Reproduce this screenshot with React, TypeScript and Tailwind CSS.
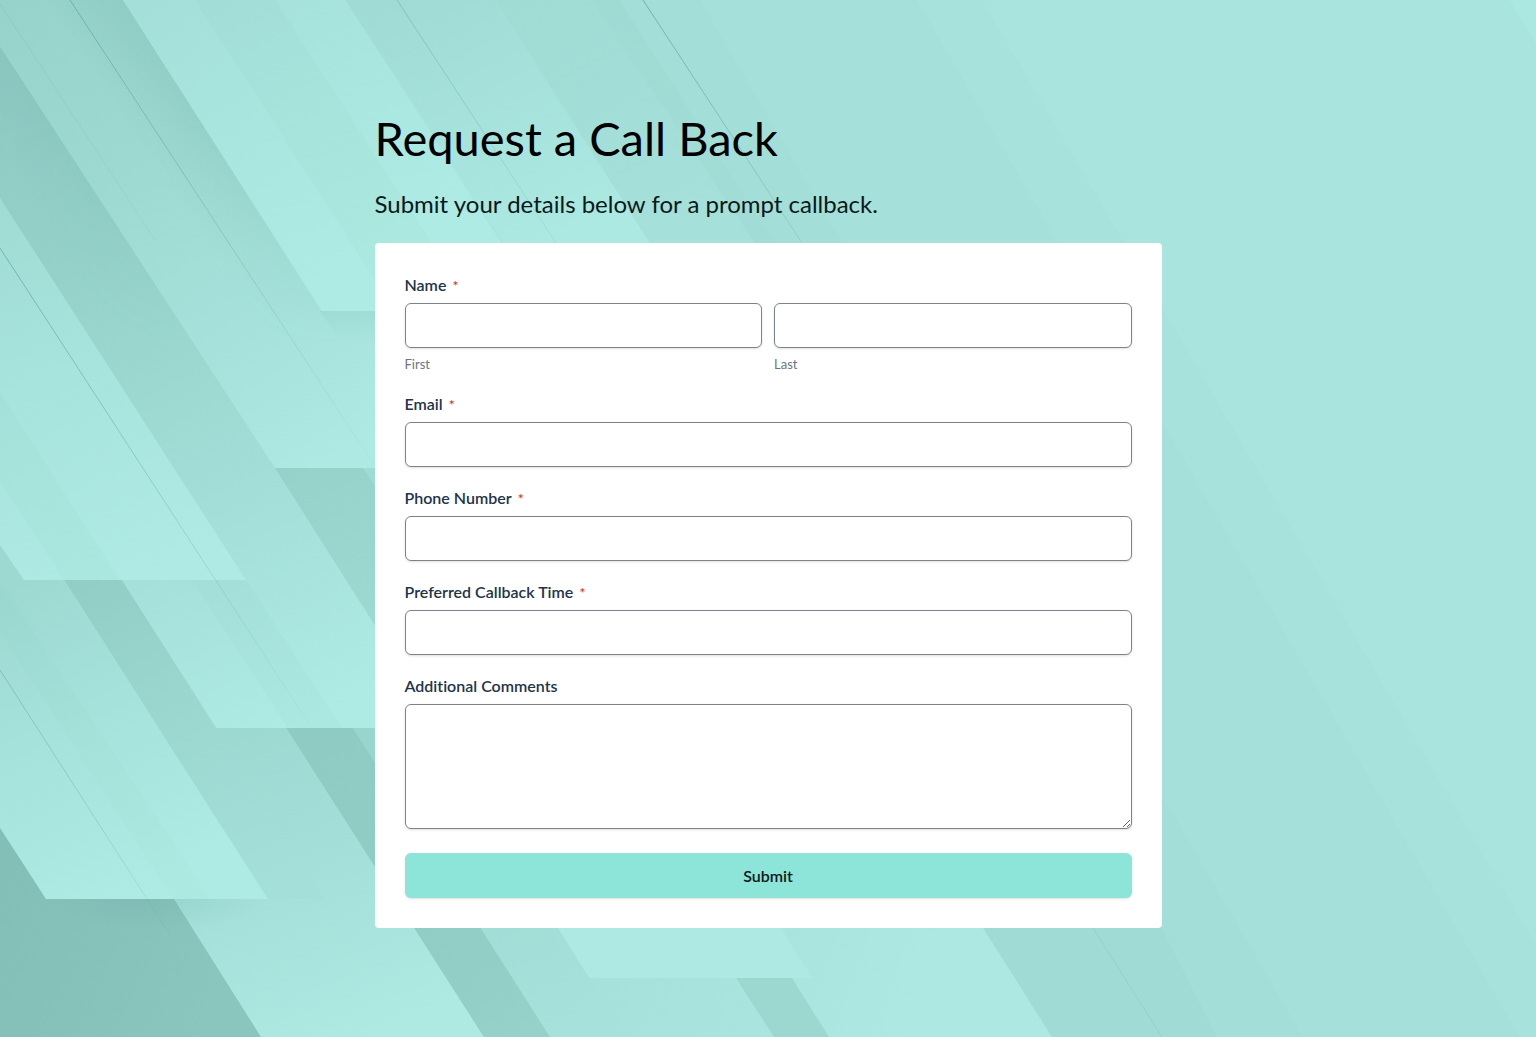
import type { ReactNode } from "react";

const fieldClass =
  "block w-full rounded-md border border-[#7d838d] bg-white px-3 text-base text-[#1e2f45] shadow-sm outline-none focus:border-[#4fb8a9]";
const labelClass = "mb-2 block text-base leading-5 font-semibold text-[#22344a]";

function Required() {
  return (
    <span className="ml-[6px] text-sm leading-none font-semibold text-[#d4401f]" aria-hidden="true">
      *
    </span>
  );
}

function Field({ id, label, required, children }: { id: string; label: string; required?: boolean; children: ReactNode }) {
  return (
    <div>
      <label htmlFor={id} className={labelClass}>
        {label}
        {required && <Required />}
      </label>
      {children}
    </div>
  );
}

type Stop = [number, string];

function Fade({ id, from, to, stops }: { id: string; from: [number, number]; to: [number, number]; stops: Stop[] }) {
  return (
    <linearGradient id={id} gradientUnits="userSpaceOnUse" x1={from[0]} y1={from[1]} x2={to[0]} y2={to[1]}>
      {stops.map(([offset, color]) => (
        <stop key={offset} offset={offset} stopColor={color} />
      ))}
    </linearGradient>
  );
}

function Shade({ id, from, to, opacity, far = 0 }: { id: string; from: [number, number]; to: [number, number]; opacity: number; far?: number }) {
  return (
    <linearGradient id={id} gradientUnits="userSpaceOnUse" x1={from[0]} y1={from[1]} x2={to[0]} y2={to[1]}>
      <stop offset="0" stopColor="#5fa39a" stopOpacity={opacity} />
      <stop offset="1" stopColor="#5fa39a" stopOpacity={far} />
    </linearGradient>
  );
}

function Backdrop() {
  return (
    <svg
      className="absolute inset-0 h-full w-full"
      viewBox="0 0 1536 1037"
      preserveAspectRatio="xMidYMid slice"
      aria-hidden="true"
    >
      <defs>
        <Fade id="upperRight" from={[400, 0]} to={[520, 260]} stops={[[0, "#a0dcd5"], [1, "#ace9e2"]]} />
        <Fade id="upperMid" from={[520, 0]} to={[640, 250]} stops={[[0, "#a0dbd4"], [1, "#a5e1da"]]} />
        <Fade id="p3" from={[150, 0]} to={[320, 290]} stops={[[0, "#a4e0d9"], [0.5, "#a9e6df"], [1, "#aeebe4"]]} />
        <Fade id="p2" from={[20, 0]} to={[330, 465]} stops={[[0, "#97d3ca"], [0.4, "#9fdad2"], [0.72, "#a6e2db"], [1, "#aeeae3"]]} />
        <Fade id="p5" from={[0, 80]} to={[310, 725]} stops={[[0, "#8fcac3"], [0.25, "#94d0c8"], [0.5, "#9dd9d1"], [0.72, "#a5e1da"], [1, "#aeebe4"]]} />
        <Fade id="p1" from={[0, 210]} to={[150, 580]} stops={[[0, "#a0dcd4"], [0.45, "#a7e4dd"], [1, "#afebe4"]]} />
        <Fade id="p4" from={[0, 590]} to={[150, 890]} stops={[[0, "#9dd9d1"], [0.5, "#a6e3dc"], [1, "#aeebe4"]]} />
        <Fade id="band4" from={[90, 580]} to={[250, 890]} stops={[[0, "#92cec6"], [0.5, "#9cd8d0"], [1, "#a4e0d9"]]} />
        <Fade id="p6" from={[250, 728]} to={[370, 1037]} stops={[[0, "#9dd9d1"], [0.45, "#a4e0d9"], [1, "#aee9e2"]]} />
        <Fade id="corner" from={[0, 900]} to={[220, 1000]} stops={[[0, "#83beb7"], [1, "#8bc6be"]]} />
        <Fade id="under2" from={[300, 468]} to={[374, 640]} stops={[[0, "#96d2c9"], [1, "#9fdad2"]]} />
        <Fade id="band6" from={[300, 740]} to={[520, 1037]} stops={[[0, "#8fcac3"], [0.8, "#92cec6"], [1, "#96d2c9"]]} />
        <Fade id="right6" from={[480, 900]} to={[560, 1037]} stops={[[0, "#a1ddd5"], [1, "#a6e2db"]]} />
        <Fade id="bottomMid" from={[540, 900]} to={[900, 1037]} stops={[[0, "#a4e0d9"], [0.6, "#a9e5de"], [1, "#ade9e2"]]} />
        <Shade id="edge3" from={[222, 150]} to={[167, 186]} opacity={0.16} />
        <Shade id="edge1" from={[67, 150]} to={[17, 183]} opacity={0.1} />
        <Shade id="foot3" from={[0, 311]} to={[0, 345]} opacity={0.12} />
        <Shade id="line" from={[0, 0]} to={[0, 460]} opacity={0.7} far={0.05} />
        <Shade id="lineUpper" from={[0, 0]} to={[0, 270]} opacity={0.75} far={0.2} />
        <Shade id="lineMid" from={[0, 248]} to={[0, 735]} opacity={0.7} far={0.05} />
        <Shade id="lineLow" from={[0, 670]} to={[0, 938]} opacity={0.5} far={0.15} />
        <radialGradient id="foot4" gradientUnits="userSpaceOnUse" cx="0" cy="0" r="1" gradientTransform="translate(155 899) scale(110 32)">
          <stop offset="0" stopColor="#5fa39a" stopOpacity="0.18" />
          <stop offset="1" stopColor="#5fa39a" stopOpacity="0" />
        </radialGradient>
        <linearGradient id="fadeDown" gradientUnits="userSpaceOnUse" x1="0" y1="120" x2="0" y2="345">
          <stop offset="0" stopColor="#fff" />
          <stop offset="1" stopColor="#000" />
        </linearGradient>
        <mask id="fadeMask" maskUnits="userSpaceOnUse" x="0" y="0" width="420" height="360">
          <rect width="420" height="360" fill="url(#fadeDown)" />
        </mask>
      </defs>

      {/* right side: broad, barely visible bands */}
      <rect width="1536" height="1037" fill="#a9e5de" />
      <polygon points="700,0 982,0 1590,1037 700,1037" fill="#a7e3dc" />
      <polygon points="700,0 917,0 1520,1037 700,1037" fill="#a5e1da" />
      <polygon points="600,0 700,0 1303,1037 600,1037" fill="#a3dfd8" />
      <polygon points="595,0 690,0 1217,1037 595,1037" fill="#a0dcd5" />
      <polygon points="595,0 700,0 870,290 780,290" fill="#a3dfd8" />
      <polygon points="1510,0 1536,0 1536,44" fill="#abe8e1" />

      {/* top centre */}
      <polygon points="345,0 495,0 680,290 535,290" fill="url(#upperRight)" />
      <polygon points="495,0 620,0 805,290 680,290" fill="url(#upperMid)" />
      <polygon points="592,0 618,0 775,243 755,243" fill="#9ddad2" opacity="0.5" />

      {/* bottom centre */}
      <polygon points="415,860 940,860 1052,1037 415,1037" fill="url(#bottomMid)" />
      <polygon points="736,978 792,978 829,1037 774,1037" fill="#9cd8d0" />
      <polygon points="528,880 751,880 812,978 588,978" fill="#aeeae3" />
      <polygon points="440,864 518,864 626,1037 550,1037" fill="url(#right6)" />

      {/* stacked slanted sheets on the left */}
      <polygon points="200,290 420,290 500,468 374,600" fill="#a9e5de" />
      <polygon points="270,460 400,460 400,728 374,728" fill="url(#under2)" />
      <polygon points="50,728 286,728 484,1037 261,1037 174,899" fill="url(#p6)" />
      <polygon points="353,728 440,728 440,864" fill="#99d5cc" />
      <polygon points="286,728 353,728 550,1037 484,1037" fill="url(#band6)" />
      <polygon points="64,580 122,580 325,899 268,899" fill="url(#band4)" />
      <polygon points="217,728 286,728 394,899 325,899" fill="url(#p6)" />
      <polygon points="0,820 46,899 174,899 261,1037 0,1037" fill="url(#corner)" />
      <rect x="40" y="899" width="230" height="36" fill="url(#foot4)" />
      <polygon points="0,540 38,540 268,899 46,899 0,828" fill="url(#p4)" />
      <polygon points="0,580 0,632 173,899 210,899" fill="#7cc3b8" opacity="0.05" />
      <polygon points="-130,0 -30,0 420,690 420,728 217,728 100,545 0,400" fill="url(#p5)" />
      <polygon points="192,580 246,580 342,728 288,728" fill="#6fb8ad" opacity="0.05" />
      <polygon points="275,468 400,468 400,665" fill="url(#under2)" />
      <polygon points="363,468 400,468 400,525" fill="#a0dcd4" />
      <g mask="url(#fadeMask)">
        <polygon points="-30,0 200,350 100,350 -130,0" fill="url(#edge1)" />
      </g>
      <polygon points="-30,0 123,0 323,311 420,311 420,468 275,468" fill="url(#p2)" />
      <g mask="url(#fadeMask)">
        <polygon points="20,0 123,0 346,350 250,350" fill="url(#edge3)" />
      </g>
      <polygon points="320,311 400,311 400,350 346,350" fill="url(#foot3)" />
      <polygon points="0,198 246,580 24,580 0,545" fill="url(#p1)" />
      <polygon points="0,392 0,482 64,580 120,580" fill="#6fb8ad" opacity="0.06" />
      <polygon points="123,0 345,0 545,311 322,311" fill="url(#p3)" />
      <polygon points="195,0 275,0 475,311 395,311" fill="#6fb8ad" opacity="0.06" />

      {/* hairline creases */}
      <g fill="none" strokeWidth="1">
        <path d="M70 0 374 465" stroke="url(#line)" />
        <path d="M0 4 155 240" stroke="url(#line)" opacity="0.3" />
        <path d="M397 0 556 243" stroke="url(#lineUpper)" opacity="0.6" />
        <path d="M643 0 802 243" stroke="url(#lineUpper)" />
        <path d="M0 248 311 727" stroke="url(#lineMid)" />
        <path d="M0 670 172 938" stroke="url(#lineLow)" />
        <path d="M1093 928 1162 1037" stroke="#8fcac3" opacity="0.6" />
      </g>
    </svg>
  );
}

export default function App() {
  return (
    <div className="relative min-h-screen bg-[#a5e1da] font-['Lato','Open_Sans',sans-serif] [font-variant-ligatures:none]">
      <Backdrop />
      <main className="relative mx-auto max-w-[787px] pt-[108px] pb-[109px]">
        <h1 className="text-[47px] leading-[60px] text-black">Request a Call Back</h1>
        <p className="mt-5 text-2xl leading-8 text-[#0b1a18]">Submit your details below for a prompt callback.</p>

        <form className="mt-[23px] space-y-[21px] rounded bg-white px-[30px] pt-8 pb-[30px]" onSubmit={(e) => e.preventDefault()}>
          <fieldset>
            <legend className={labelClass}>
              Name
              <Required />
            </legend>
            <div className="grid grid-cols-2 gap-3">
              <div>
                <input id="first" type="text" required className={`${fieldClass} h-[45px]`} />
                <label htmlFor="first" className="mt-2 block text-[13px] leading-[17px] text-[#6b7480]">
                  First
                </label>
              </div>
              <div>
                <input id="last" type="text" required className={`${fieldClass} h-[45px]`} />
                <label htmlFor="last" className="mt-2 block text-[13px] leading-[17px] text-[#6b7480]">
                  Last
                </label>
              </div>
            </div>
          </fieldset>
          <Field id="email" label="Email" required>
            <input id="email" type="email" required className={`${fieldClass} h-[45px]`} />
          </Field>
          <Field id="phone" label="Phone Number" required>
            <input id="phone" type="tel" required className={`${fieldClass} h-[45px]`} />
          </Field>
          <Field id="time" label="Preferred Callback Time" required>
            <input id="time" type="text" required className={`${fieldClass} h-[45px]`} />
          </Field>
          <Field id="comments" label="Additional Comments">
            <textarea id="comments" className={`${fieldClass} h-[125px] resize-y py-2`} />
          </Field>
          <button
            type="submit"
            className="mt-6 block h-[45px] w-full rounded-md bg-[#8de4d8] text-base font-semibold text-[#0b1a18] shadow-sm"
          >
            Submit
          </button>
        </form>
      </main>
    </div>
  );
}
